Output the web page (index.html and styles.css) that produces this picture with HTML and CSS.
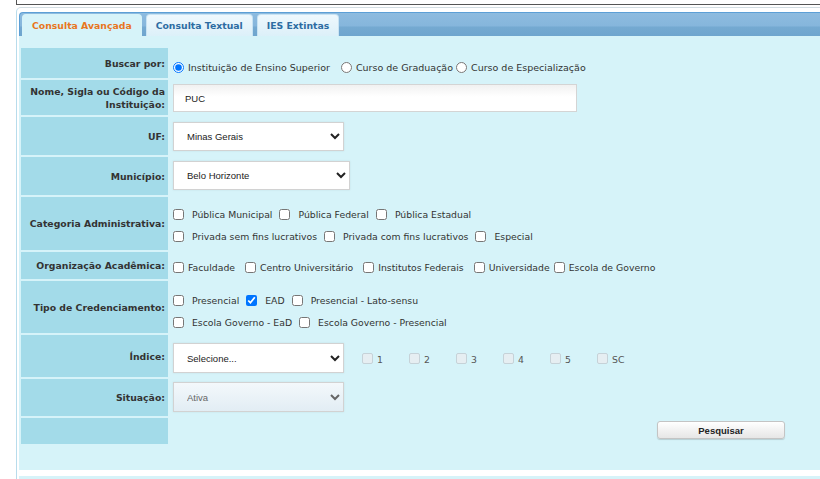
FILE: index.html
```html
<!DOCTYPE html>
<html lang="pt-BR">
<head>
<meta charset="utf-8">
<title>Consulta Avançada</title>
<link rel="stylesheet" href="styles.css">
</head>
<body>
<div class="frame"></div>
<div class="panel">
  <div class="tabbar">
    <span class="tab active">Consulta Avançada</span>
    <span class="tab">Consulta Textual</span>
    <span class="tab">IES Extintas</span>
  </div>
  <div class="content">
    <table class="form">
      <tr class="r-buscar">
        <th class="lbl">Buscar por:</th>
        <td class="val pt8">
          <div class="line big">
            <label class="opt o1"><input type="radio" name="buscar" checked>Instituição de Ensino Superior</label>
            <label class="opt o2"><input type="radio" name="buscar">Curso de Graduação</label>
            <label class="opt"><input type="radio" name="buscar">Curso de Especialização</label>
          </div>
        </td>
      </tr>
      <tr class="r-nome">
        <th class="lbl">Nome, Sigla ou Código da<br>Instituição:</th>
        <td class="val pt4"><input class="txt" type="text" value="PUC"></td>
      </tr>
      <tr class="r-uf">
        <th class="lbl">UF:</th>
        <td class="val pt5"><select class="sel w171"><option>Minas Gerais</option></select></td>
      </tr>
      <tr class="r-mun">
        <th class="lbl">Município:</th>
        <td class="val pt4"><select class="sel w177"><option>Belo Horizonte</option></select></td>
      </tr>
      <tr class="r-cat">
        <th class="lbl">Categoria Administrativa:</th>
        <td class="val pt6">
          <div class="line">
            <label class="chk"><input type="checkbox">Pública Municipal</label>
            <label class="chk"><input type="checkbox">Pública Federal</label>
            <label class="chk"><input type="checkbox">Pública Estadual</label>
          </div>
          <div class="line">
            <label class="chk"><input type="checkbox">Privada sem fins lucrativos</label>
            <label class="chk"><input type="checkbox">Privada com fins lucrativos</label>
            <label class="chk"><input type="checkbox">Especial</label>
          </div>
        </td>
      </tr>
      <tr class="r-org">
        <th class="lbl">Organização Acadêmica:</th>
        <td class="val pt4">
          <div class="line">
            <label class="chk tight"><input type="checkbox">Faculdade</label>
            <label class="chk tight"><input type="checkbox">Centro Universitário</label>
            <label class="chk tight"><input type="checkbox">Institutos Federais</label>
            <label class="chk tight close"><input type="checkbox">Universidade</label>
            <label class="chk tight"><input type="checkbox">Escola de Governo</label>
          </div>
        </td>
      </tr>
      <tr class="r-tipo">
        <th class="lbl">Tipo de Credenciamento:</th>
        <td class="val pt8">
          <div class="line">
            <label class="chk"><input type="checkbox">Presencial</label>
            <label class="chk"><input type="checkbox" checked>EAD</label>
            <label class="chk"><input type="checkbox">Presencial - Lato-sensu</label>
          </div>
          <div class="line">
            <label class="chk"><input type="checkbox">Escola Governo - EaD</label>
            <label class="chk"><input type="checkbox">Escola Governo - Presencial</label>
          </div>
        </td>
      </tr>
      <tr class="r-ind">
        <th class="lbl">Índice:</th>
        <td class="val pt8">
          <div class="idxrow">
            <select class="sel w171 h30"><option>Selecione...</option></select>
            <div class="idxlist">
              <label class="idx"><input type="checkbox" disabled><span>1</span></label>
              <label class="idx"><input type="checkbox" disabled><span>2</span></label>
              <label class="idx"><input type="checkbox" disabled><span>3</span></label>
              <label class="idx"><input type="checkbox" disabled><span>4</span></label>
              <label class="idx"><input type="checkbox" disabled><span>5</span></label>
              <label class="idx"><input type="checkbox" disabled><span>SC</span></label>
            </div>
          </div>
        </td>
      </tr>
      <tr class="r-sit">
        <th class="lbl">Situação:</th>
        <td class="val pt3"><select class="sel w171 h30 soft"><option>Ativa</option></select></td>
      </tr>
      <tr class="r-btn">
        <th class="lbl"></th>
        <td class="val pt3"><button class="btn" type="button">Pesquisar</button></td>
      </tr>
    </table>
  </div>
  <div class="gap"></div>
  <div class="after"></div>
</div>
</body>
</html>
```
FILE: styles.css
```css
* { box-sizing: border-box; }
html, body { margin: 0; padding: 0; background: #fff; overflow: hidden; }
body {
  width: 820px;
  height: 479px;
  font-family: "DejaVu Sans", Verdana, sans-serif;
  font-size: 9.3px;
  color: #333;
}

.frame {
  width: 900px;
  height: 5px;
  margin-left: 16px;
  border-left: 1px solid #555;
  border-bottom: 1px solid #555;
}

.panel {
  width: 900px;
  margin: 2px 0 0 16px;
  border-top: 1px solid #d3dde2;
  border-left: 1px solid #b8dcec;
  border-top-left-radius: 5px;
  padding: 4px 0 0 2px;
}

.tabbar {
  height: 24px;
  display: flex;
  align-items: flex-end;
  gap: 4px;
  padding-left: 2px;
  border-top: 1px solid #5c9fd6;
  border-left: 1px solid #5c9fd6;
  border-top-left-radius: 4px;
  background: linear-gradient(#8dbbdf, #86b6dc 55%, #74a9d1 62%, #6fa5ce);
}

.tab {
  height: 22px;
  padding: 0 9px;
  line-height: 21px;
  font-weight: bold;
  color: #2d6ca2;
  border: 1px solid #c8e3f3;
  border-bottom: none;
  border-radius: 4px 4px 0 0;
  background: linear-gradient(#eef8fd, #dcf0f9);
  white-space: nowrap;
}
.tab.active {
  color: #e8761e;
  background: #d6f3f9;
  border-color: #d6f3f9;
}

.content {
  background: #d6f3f9;
  padding: 10px 0 24px;
}

.form { border-collapse: separate; border-spacing: 2px; }

.lbl {
  width: 147px;
  background: #a3dbe9;
  text-align: right;
  padding: 0 3px 0 0;
  font-weight: bold;
  white-space: nowrap;
  vertical-align: middle;
  line-height: 13px;
  color: #333;
}
.val { vertical-align: top; padding: 0 0 0 3px; }

.r-buscar { height: 30px; }
.r-nome { height: 35px; }
.r-uf { height: 38px; }
.r-mun { height: 38px; }
.r-cat { height: 53px; }
.r-org { height: 27px; }
.r-tipo { height: 52px; }
.r-ind { height: 42px; }
.r-sit { height: 37px; }
.r-btn { height: 26px; }

.pt3 { padding-top: 3px; }
.pt4 { padding-top: 4px; }
.pt5 { padding-top: 5px; }
.pt6 { padding-top: 6px; }
.pt8 { padding-top: 8px; }

.line {
  display: flex;
  align-items: center;
  height: 22px;
  white-space: nowrap;
}
.line.big { font-size: 9.5px; }

.opt, .chk { display: inline-flex; align-items: center; }
.opt input {
  width: 11px; height: 11px;
  margin: 0 4px 0 0;
}
.o1 { margin-right: 11px; }
.o2 { margin-right: 3px; }

.chk input {
  width: 11px; height: 11px;
  margin: 0 8px 0 0;
}
.chk { margin-right: 7px; }
.chk.tight input { margin-right: 4px; }
.chk.tight { margin-right: 10px; }
.chk.close { margin-right: 4px; }

.txt {
  width: 404px;
  height: 28px;
  border: 1px solid #d4d4d4;
  padding: 0 11px;
  font-family: "Liberation Sans", Arial, sans-serif;
  font-size: 9.5px;
  color: #222;
  background: linear-gradient(#f1f1f1, #fff 45%);
}

.sel {
  height: 29px;
  border: 1px solid #d2d2d2;
  background: #fff;
  padding: 0 0 0 9px;
  font-family: "Liberation Sans", Arial, sans-serif;
  font-size: 9.5px;
  color: #222;
  border-radius: 0;
  box-shadow: 0 0 2px rgba(0, 0, 0, 0.08);
}
.w171 { width: 171px; }
.w177 { width: 177px; }
.h30 { height: 30px; }
.sel.soft {
  color: #666;
  background: linear-gradient(#f3f8fb, #e2edf4);
}

.idxrow { display: flex; align-items: center; }
.idxlist { display: flex; margin-left: 18px; }
.idx {
  display: inline-flex;
  align-items: center;
  width: 47px;
  color: #555;
}
.idx input {
  appearance: none;
  -webkit-appearance: none;
  width: 11px; height: 11px;
  margin: 0 4px 0 0;
  border: 1px solid #c6d2d8;
  border-radius: 2px;
  background: #e6eef2;
}
.idx span { padding-top: 3px; }

.btn {
  margin-left: 484px;
  width: 128px;
  height: 18px;
  padding: 0;
  font-family: "Liberation Sans", Arial, sans-serif;
  font-size: 9.5px;
  font-weight: bold;
  color: #222;
  background: linear-gradient(#ffffff, #e6e6e6);
  border: 1px solid #c4c4c4;
  border-radius: 3px;
  box-shadow: 0 1px 1px rgba(0, 0, 0, 0.15);
}

.gap { height: 6px; background: #fff; }
.after { height: 10px; background: #d6f3f9; }
```
